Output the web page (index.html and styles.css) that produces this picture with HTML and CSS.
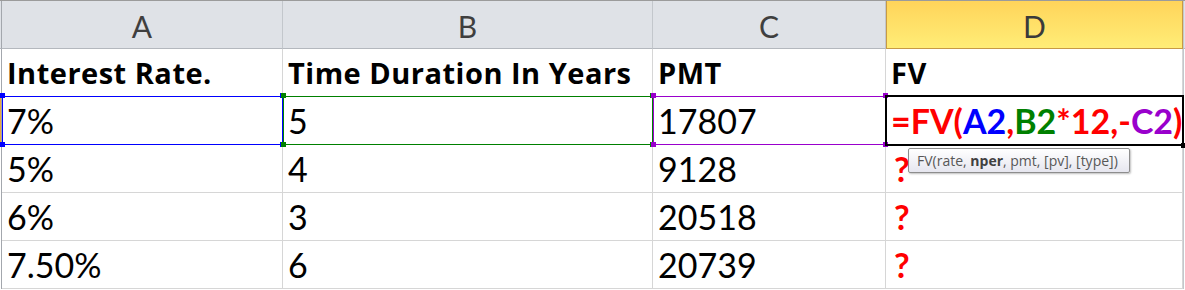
FILE: index.html
```html
<!DOCTYPE html>
<html lang="en">
  <head>
    <meta charset="UTF-8" />
    <title>FV Formula</title>
    <link rel="stylesheet" href="styles.css">
  </head>
  <body>
    <div class="sheet">
      <!-- column letters -->
      <div class="edge head-edge"></div>
      <div class="head">A</div>
      <div class="head">B</div>
      <div class="head">C</div>
      <div class="head active">D</div>
      <div class="tail head-tail"></div>

      <!-- row 1: titles -->
      <div class="edge"></div>
      <div class="cell title">Interest Rate.</div>
      <div class="cell title">Time Duration In Years</div>
      <div class="cell title">PMT</div>
      <div class="cell title">FV</div>
      <div class="tail"></div>

      <!-- row 2: the one being edited -->
      <div class="edge edge-on"></div>
      <div class="cell ref ref-blue">7%</div>
      <div class="cell ref ref-green">5</div>
      <div class="cell ref ref-purple">17807</div>
      <div class="cell editing">
        <span class="formula">=FV(<span class="c-blue">A2</span>,<span class="c-green">B2</span>*12,-<span class="c-purple">C2</span>)</span>
        <div class="tip">FV(rate, <b>nper</b>, pmt, [pv], [type])</div>
      </div>
      <div class="tail"></div>

      <div class="edge"></div>
      <div class="cell">5%</div>
      <div class="cell">4</div>
      <div class="cell">9128</div>
      <div class="cell ask">?</div>
      <div class="tail"></div>

      <div class="edge"></div>
      <div class="cell">6%</div>
      <div class="cell">3</div>
      <div class="cell">20518</div>
      <div class="cell ask">?</div>
      <div class="tail"></div>

      <div class="edge"></div>
      <div class="cell">7.50%</div>
      <div class="cell">6</div>
      <div class="cell">20739</div>
      <div class="cell ask">?</div>
      <div class="tail"></div>
    </div>
  </body>
</html>
```

FILE: styles.css
```css
body {
  margin: 0;
  background: #fff;
  font-family: Lato, "Liberation Sans", sans-serif;
  overflow: hidden;
}

.sheet {
  display: grid;
  grid-template-columns: 2px 281px 370px 233px 297px 1fr;
  grid-auto-rows: 48px;
  border-top: 1px solid #9b9b9b;
}

.edge {
  border-right: 1px solid #a3a7ad;
}

.edge-on {
  border-left: 1px solid #e8a640;
}

.head-edge {
  background: #dfe2e7;
  border-bottom: 1px solid #b4b8be;
}

.head {
  display: flex;
  align-items: center;
  justify-content: center;
  background: #dfe2e7;
  border-right: 1px solid #c3c7cc;
  border-bottom: 1px solid #b4b8be;
  color: #3f3f3f;
  font-size: 30px;
  padding-top: 2px;
}

.head.active {
  background: linear-gradient(#ffd45a, #ffed77);
  border: 1px solid #c79a45;
  border-top: none;
  color: #3a3a3a;
}

.tail {
  border-left: 1px solid #c3c7cc;
}

.head-tail {
  background: #dfe2e7;
  border-bottom: 1px solid #b4b8be;
}

.cell {
  position: relative;
  display: flex;
  align-items: flex-end;
  padding: 0 5px 6px;
  border-right: 1px solid #d6d6d6;
  border-bottom: 1px solid #d6d6d6;
  color: #000;
  font-size: 34px;
  line-height: 1;
  white-space: nowrap;
}

.cell.title {
  font-family: "Open Sans", sans-serif;
  font-size: 29px;
  font-weight: bold;
  letter-spacing: 0.5px;
  padding-bottom: 9px;
}

.ask,
.formula {
  color: #ff0000;
  font-weight: bold;
  font-size: 34px;
}

.ask {
  padding-left: 8px;
}

.c-blue { color: #0000ff; }
.c-green { color: #008000; }
.c-purple { color: #9900cc; }

/* coloured range boxes around the cells used by the formula */
.ref::before {
  content: "";
  position: absolute;
  top: -1px;
  left: 0;
  right: -1px;
  bottom: -1px;
  border: 1px solid var(--ref);
}

.ref::after {
  content: "";
  position: absolute;
  top: -4px;
  left: -2px;
  right: -3px;
  bottom: -3px;
  background:
    linear-gradient(var(--ref), var(--ref)) left top / 5px 5px no-repeat,
    linear-gradient(var(--ref), var(--ref)) right top / 5px 5px no-repeat,
    linear-gradient(var(--ref), var(--ref)) left bottom / 5px 5px no-repeat,
    linear-gradient(var(--ref), var(--ref)) right bottom / 5px 5px no-repeat;
  z-index: 1;
}

.ref-blue { --ref: #0000ff; }
.ref-green { --ref: #008000; }
.ref-purple { --ref: #9900cc; }

.editing::before {
  content: "";
  position: absolute;
  top: -2px;
  left: -1px;
  right: -2px;
  bottom: -2px;
  border: 2px solid #000;
  z-index: 2;
}

.editing::after {
  content: "";
  position: absolute;
  right: -4px;
  bottom: -4px;
  width: 5px;
  height: 5px;
  background: #000;
  z-index: 3;
}

.tip {
  position: absolute;
  top: 51px;
  left: 22px;
  width: 222px;
  height: 25px;
  box-sizing: border-box;
  padding: 3px 0 0 8px;
  border: 1px solid #8d8d8d;
  border-radius: 2px;
  background: linear-gradient(#ffffff, #e6e6ef);
  box-shadow: 1px 1px 2px rgba(0, 0, 0, 0.25);
  color: #575757;
  font-family: "Open Sans", sans-serif;
  font-size: 14px;
  font-weight: normal;
  line-height: 17px;
  z-index: 4;
}

.tip b {
  color: #404040;
}
```
